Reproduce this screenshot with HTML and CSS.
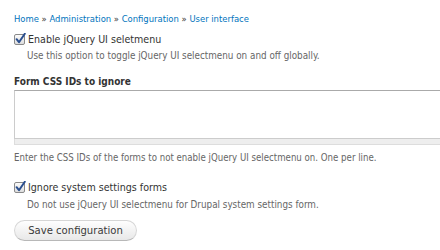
FILE: index.html
```html
<!DOCTYPE html>
<html>
<head>
<meta charset="utf-8">
<link rel="stylesheet" href="styles.css">
</head>
<body>
<div class="page">
  <nav class="breadcrumb"><a href="#">Home</a> » <a href="#">Administration</a> » <a href="#">Configuration</a> » <a href="#">User interface</a></nav>

  <div class="item first">
    <label class="check"><svg class="cb" width="12" height="12" viewBox="0 0 12 12"><defs><linearGradient id="g1" x1="0" y1="0" x2="0" y2="1"><stop offset="0" stop-color="#fdfdfd"/><stop offset="1" stop-color="#dcdcdc"/></linearGradient></defs><rect x="0.5" y="1.5" width="10" height="10" rx="1.5" fill="url(#g1)" stroke="#8a8a8a"/><path d="M2.6 6.2 L5 9.2 L10.8 0.8" fill="none" stroke="#2a4f8f" stroke-width="2" stroke-linecap="round" stroke-linejoin="round"/></svg><span>Enable jQuery UI seletmenu</span></label>
    <div class="desc indent">Use this option to toggle jQuery UI selectmenu on and off globally.</div>
  </div>

  <div class="item field">
    <div class="field-label">Form CSS IDs to ignore</div>
    <div class="ta-wrap">
      <div class="ta"></div>
      <div class="grippie"></div>
    </div>
    <div class="desc">Enter the CSS IDs of the forms to not enable jQuery UI selectmenu on. One per line.</div>
  </div>

  <div class="item second">
    <label class="check"><svg class="cb" width="12" height="12" viewBox="0 0 12 12"><defs><linearGradient id="g2" x1="0" y1="0" x2="0" y2="1"><stop offset="0" stop-color="#fdfdfd"/><stop offset="1" stop-color="#dcdcdc"/></linearGradient></defs><rect x="0.5" y="1.5" width="10" height="10" rx="1.5" fill="url(#g2)" stroke="#8a8a8a"/><path d="M2.6 6.2 L5 9.2 L10.8 0.8" fill="none" stroke="#2a4f8f" stroke-width="2" stroke-linecap="round" stroke-linejoin="round"/></svg><span>Ignore system settings forms</span></label>
    <div class="desc indent d2">Do not use jQuery UI selectmenu for Drupal system settings form.</div>
  </div>

  <div class="actions"><button class="btn">Save configuration</button></div>
</div>
</body>
</html>
```

FILE: styles.css
```css
html, body {
  margin: 0;
  padding: 0;
  background: #fff;
  overflow: hidden;
}
body {
  font-family: "DejaVu Sans Condensed", "DejaVu Sans", sans-serif;
  font-stretch: condensed;
  color: #333;
  width: 440px;
  height: 250px;
}
.page {
  padding: 12px 0 0 14px;
}
.breadcrumb {
  font-size: 9.4px;
  line-height: 14px;
  color: #333;
}
.breadcrumb a {
  color: #0074bd;
  text-decoration: none;
}
.first {
  margin-top: 6px;
}
.check {
  display: flex;
  align-items: center;
  gap: 2px;
  font-size: 10.6px;
  line-height: 14px;
  color: #333;
}
.cb {
  flex: none;
}
.desc {
  font-size: 9.8px;
  line-height: 14px;
  color: #666;
  margin-top: 3px;
}
.indent {
  padding-left: 13px;
}
.field {
  margin-top: 12px;
}
.field-label {
  font-size: 10px;
  font-weight: bold;
  line-height: 14px;
  color: #333;
}
.ta-wrap {
  margin-top: 1px;
}
.ta {
  height: 47px;
  border: 1px solid #ccc;
  border-right: 0;
  border-top-color: #aaa;
  background: #fff;
}
.grippie {
  height: 5px;
  background: #eee;
  border: 1px solid #ddd;
  border-top: 0;
  border-right: 0;
}
.field .desc {
  margin-top: 6px;
  font-size: 9.6px;
}
.second {
  margin-top: 15px;
}
.d2 {
  margin-top: 4px;
}
.actions {
  margin-top: 7px;
}
.btn {
  font-family: "DejaVu Sans Condensed", "DejaVu Sans", sans-serif;
  font-stretch: condensed;
  font-size: 11.2px;
  color: #3a3a3a;
  height: 21px;
  width: 123px;
  padding: 0;
  border-radius: 11px;
  border: 1px solid #d6d6d6;
  border-bottom-color: #b8b8b8;
  background: linear-gradient(#fefefe, #e8e8e8);
}
```
